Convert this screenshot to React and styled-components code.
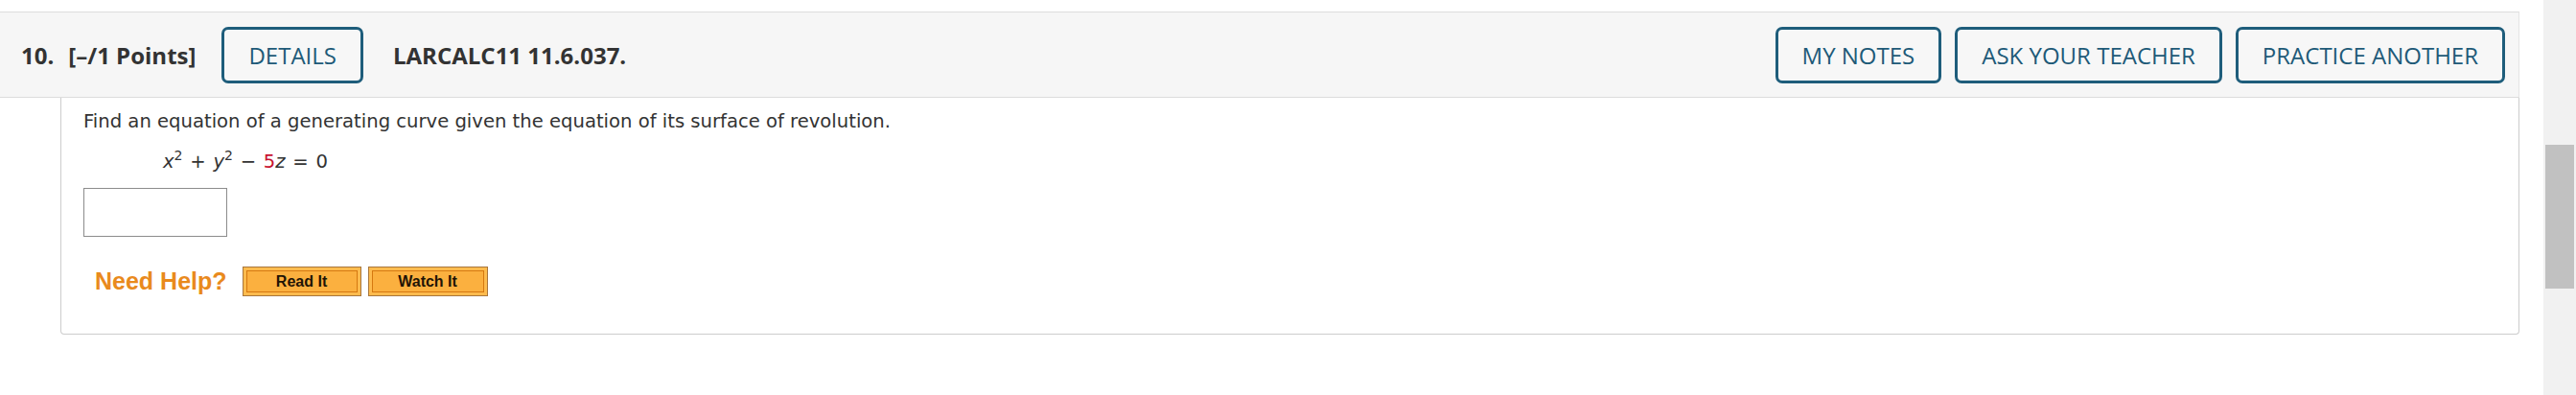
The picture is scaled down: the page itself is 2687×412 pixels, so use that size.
import React from "react"
import styled, { createGlobalStyle } from "styled-components"

const GlobalStyle = createGlobalStyle`
  html, body {
    margin: 0;
    padding: 0;
    background: #ffffff;
    overflow: hidden;
  }
`

export default function App() {
  return (
    <>
      <GlobalStyle />
      <Page>
        <Main>
          <QuestionHeader>
            <HeaderLeft>
              <Number>10.</Number>
              <Points>[–/1 Points]</Points>
              <OutlineButton>DETAILS</OutlineButton>
              <Code>LARCALC11 11.6.037.</Code>
            </HeaderLeft>
            <HeaderRight>
              <OutlineButton>MY NOTES</OutlineButton>
              <OutlineButton>ASK YOUR TEACHER</OutlineButton>
              <OutlineButton>PRACTICE ANOTHER</OutlineButton>
            </HeaderRight>
          </QuestionHeader>
          <QuestionBody>
            <Prompt>
              Find an equation of a generating curve given the equation of its surface of revolution.
            </Prompt>
            <Equation>
              <Var>x</Var><Sup>2</Sup> + <Var>y</Var><Sup>2</Sup> − <Coef>5</Coef><Var>z</Var> = 0
            </Equation>
            <AnswerInput type="text" />
            <HelpRow>
              <HelpLabel>Need Help?</HelpLabel>
              <HelpButtons>
                <HelpButton $w={124}>Read It</HelpButton>
                <HelpButton $w={125}>Watch It</HelpButton>
              </HelpButtons>
            </HelpRow>
          </QuestionBody>
        </Main>
        <ScrollTrack>
          <ScrollThumb />
        </ScrollTrack>
      </Page>
    </>
  )
}

const Page = styled.div`
  display: flex;
  width: 2687px;
  height: 412px;
`

const Main = styled.div`
  flex: 1;
  padding: 12px 25px 0 0;
`

const QuestionHeader = styled.div`
  display: flex;
  align-items: center;
  justify-content: space-between;
  height: 88px;
  padding: 0 14px 0 22px;
  background: #f6f6f6;
  border-top: 1px solid #dddddd;
  border-bottom: 1px solid #dddddd;
  border-right: 1px solid #e4e4e4;
  font-family: "Open Sans", "Liberation Sans", sans-serif;
  font-size: 24px;
  color: #333333;
`

const HeaderLeft = styled.div`
  display: flex;
  align-items: center;
`

const HeaderRight = styled.div`
  display: flex;
  align-items: center;
  gap: 14px;
`

const Number = styled.span`
  font-weight: 700;
  margin-right: 15px;
`

const Points = styled.span`
  font-weight: 700;
  margin-right: 27px;
`

const Code = styled.span`
  font-weight: 700;
  margin-left: 31px;
`

const OutlineButton = styled.button`
  height: 59px;
  padding: 0 25px;
  border: 3px solid #1e5d7b;
  border-radius: 7px;
  background: #f7f7f7;
  color: #1e5a78;
  font-family: "Open Sans", "Liberation Sans", sans-serif;
  font-size: 24px;
  font-weight: 400;
  cursor: pointer;
`

const QuestionBody = styled.div`
  margin-left: 63px;
  padding: 13px 0 39px 23px;
  border: 1px solid #cccccc;
  border-top: none;
  border-radius: 0 0 4px 4px;
  font-family: "DejaVu Sans", Verdana, sans-serif;
  font-size: 19.6px;
  line-height: 23px;
  color: #333333;
`

const Prompt = styled.div``

const Equation = styled.div`
  margin: 19px 0 0 83px;
  word-spacing: 1.5px;
`

const Var = styled.i``

const Sup = styled.sup`
  font-size: 14px;
  line-height: 0;
  vertical-align: 8px;
`

const Coef = styled.span`
  color: #c8102e;
`

const AnswerInput = styled.input`
  display: block;
  box-sizing: border-box;
  width: 150px;
  height: 51px;
  margin-top: 16px;
  border: 1px solid #8c8c8c;
  background: #ffffff;
`

const HelpRow = styled.div`
  display: flex;
  align-items: center;
  height: 31px;
  margin-top: 31px;
  padding-left: 12px;
`

const HelpLabel = styled.span`
  font-family: "Liberation Sans", Arial, sans-serif;
  font-weight: 700;
  font-size: 25px;
  color: #e98a1d;
  margin-right: 16px;
`

const HelpButtons = styled.div`
  display: flex;
  gap: 7px;
`

const HelpButton = styled.button`
  box-sizing: border-box;
  width: ${p => p.$w}px;
  height: 31px;
  padding: 0;
  border: 1px solid #a8763c;
  background: #fbb03f;
  box-shadow: inset 0 0 0 3px #fdbb4e, inset 0 0 0 4px #d57810;
  font-family: "Liberation Sans", Arial, sans-serif;
  font-weight: 700;
  font-size: 16px;
  color: #1f1406;
  cursor: pointer;
`

const ScrollTrack = styled.div`
  width: 34px;
  padding: 151px 2px 0;
  box-sizing: border-box;
  background: #f1f1f1;
`

const ScrollThumb = styled.div`
  height: 150px;
  background: #c1c1c1;
`
